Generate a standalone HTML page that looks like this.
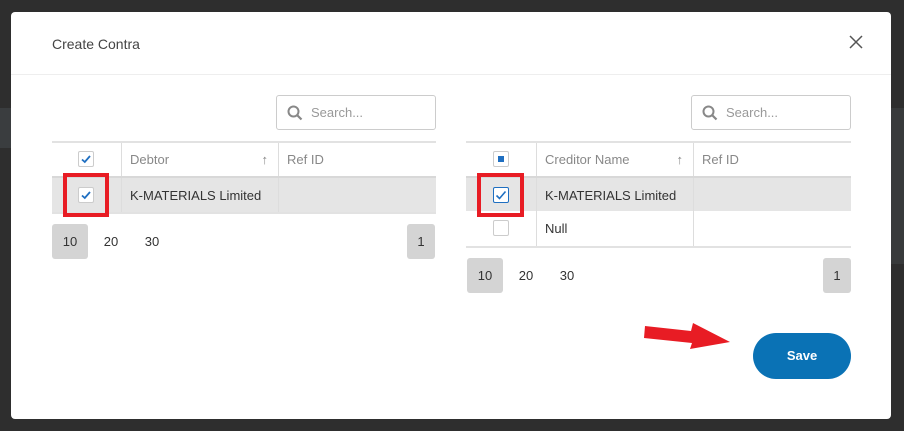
<!DOCTYPE html>
<html><head><style>
*{box-sizing:border-box;margin:0;padding:0}
body{width:904px;height:431px;background:#2e2e2e;position:relative;overflow:hidden;font-family:"Liberation Sans",sans-serif;color:#333}
.modal{position:absolute;left:11px;top:12px;width:880px;height:407px;background:#fff;border-radius:4px}
.title{position:absolute;left:41px;top:24px;font-size:14px;color:#444}
.hr{position:absolute;left:0;right:0;top:62px;border-top:1px solid #eee}
.close{position:absolute;left:837px;top:22px}
.search{position:absolute;width:160px;height:35px;border:1px solid #ccc;border-radius:3px;font-size:13px;color:#999}
.search span{position:absolute;left:34px;top:9px}
.search svg{position:absolute;left:10px;top:9px}
.tbl{position:absolute;border-top:2px solid #e2e2e2;font-size:13px}
.row{position:absolute;left:0;right:0;height:35px}
.cell{position:absolute;top:0;height:100%;border-left:1px solid #ddd;padding:10px 0 0 8px}
.hd{color:#888}
.cb{position:absolute;width:16px;height:16px;border:1px solid #ccc;background:#fff;border-radius:2px}
.pg{position:absolute;height:35px;font-size:13px;line-height:35px}
.pg div{position:absolute;top:0;height:35px;text-align:center}
.btn{background:#d4d4d4;border-radius:3px}
.redbox{position:absolute;border:4px solid #e81c24}
.save{position:absolute;left:742px;top:321px;width:98px;height:46px;border-radius:23px;background:#0a72b5;color:#fff;font-weight:bold;font-size:13px;text-align:center;line-height:46px}
</style></head><body>
<div style="position:absolute;left:0;top:108px;width:11px;height:40px;background:#3a3d3f"></div>
<div style="position:absolute;left:891px;top:108px;width:13px;height:156px;background:#383a3b"></div>
<div class="modal">
<div class="title">Create Contra</div>
<svg class="close" width="16" height="16" viewBox="0 0 16 16"><path d="M2 2L14 14M14 2L2 14" stroke="#555" stroke-width="1.5"/></svg>
<div class="hr"></div>

<div class="search" style="left:265px;top:83px"><svg width="16" height="16" viewBox="0 0 16 16"><circle cx="6.5" cy="6.5" r="5" fill="none" stroke="#888" stroke-width="2"/><path d="M10 10L14.5 14.5" stroke="#888" stroke-width="2.2"/></svg><span>Search...</span></div>
<div class="tbl" style="left:41px;top:129px;width:384px;height:73px;border-bottom:2px solid #e2e2e2">
 <div class="row hd" style="top:0;height:33px"><div class="cb" style="left:26px;top:8px"><svg width="14" height="14" viewBox="0 0 14 14"><path d="M3 7.5L5.8 10L11 4" fill="none" stroke="#1f6fc1" stroke-width="1.8"/></svg></div>
 <div class="cell" style="left:69px;width:157px;padding-top:9px">Debtor<span style="position:absolute;right:10px">↑</span></div><div class="cell" style="left:226px;width:158px;padding-top:9px">Ref ID</div></div>
 <div class="row" style="top:33px;height:36px;background:#e5e5e5;border-top:2px solid #d8d8d8"><div class="cb" style="left:26px;top:9px"><svg width="14" height="14" viewBox="0 0 14 14"><path d="M3 7.5L5.8 10L11 4" fill="none" stroke="#1f6fc1" stroke-width="1.8"/></svg></div>
 <div class="cell" style="left:69px;width:157px">K-MATERIALS Limited</div><div class="cell" style="left:226px;width:158px"></div></div>
</div>
<div class="redbox" style="left:52px;top:161px;width:46px;height:44px"></div>
<div class="pg" style="left:41px;top:212px;width:384px"><div class="btn" style="left:0;width:36px">10</div><div style="left:48px;width:22px">20</div><div style="left:89px;width:22px">30</div><div class="btn" style="left:355px;width:28px">1</div></div>

<div class="search" style="left:680px;top:83px"><svg width="16" height="16" viewBox="0 0 16 16"><circle cx="6.5" cy="6.5" r="5" fill="none" stroke="#888" stroke-width="2"/><path d="M10 10L14.5 14.5" stroke="#888" stroke-width="2.2"/></svg><span>Search...</span></div>
<div class="tbl" style="left:455px;top:129px;width:385px;height:107px;border-bottom:2px solid #e2e2e2">
 <div class="row hd" style="top:0;height:33px"><div class="cb" style="left:27px;top:8px"><div style="position:absolute;left:4px;top:4px;width:6px;height:6px;background:#1f6fc1"></div></div>
 <div class="cell" style="left:70px;width:157px;padding-top:9px">Creditor Name<span style="position:absolute;right:10px">↑</span></div><div class="cell" style="left:227px;width:158px;padding-top:9px">Ref ID</div></div>
 <div class="row" style="top:33px;background:#e5e5e5;border-top:2px solid #d8d8d8"><div class="cb" style="left:27px;top:9px;border-color:#1f6fc1"><svg width="14" height="14" viewBox="0 0 14 14"><path d="M2.5 7.5L5.5 10.5L11.5 3.5" fill="none" stroke="#1f6fc1" stroke-width="1.6"/></svg></div>
 <div class="cell" style="left:70px;width:157px">K-MATERIALS Limited</div><div class="cell" style="left:227px;width:158px"></div></div>
 <div class="row" style="top:68px"><div class="cb" style="left:27px;top:9px"></div>
 <div class="cell" style="left:70px;width:157px">Null</div><div class="cell" style="left:227px;width:158px"></div></div>
</div>
<div class="redbox" style="left:466px;top:161px;width:47px;height:44px"></div>
<div class="pg" style="left:456px;top:246px;width:384px"><div class="btn" style="left:0;width:36px">10</div><div style="left:48px;width:22px">20</div><div style="left:89px;width:22px">30</div><div class="btn" style="left:356px;width:28px">1</div></div>

<svg style="position:absolute;left:633px;top:310px" width="90" height="30" viewBox="0 0 90 30"><path d="M1 4L47 9L49 1L86 20L46 27L48 21L0 16Z" fill="#e81c24"/></svg>
<div class="save">Save</div>
</div>
</body></html>
